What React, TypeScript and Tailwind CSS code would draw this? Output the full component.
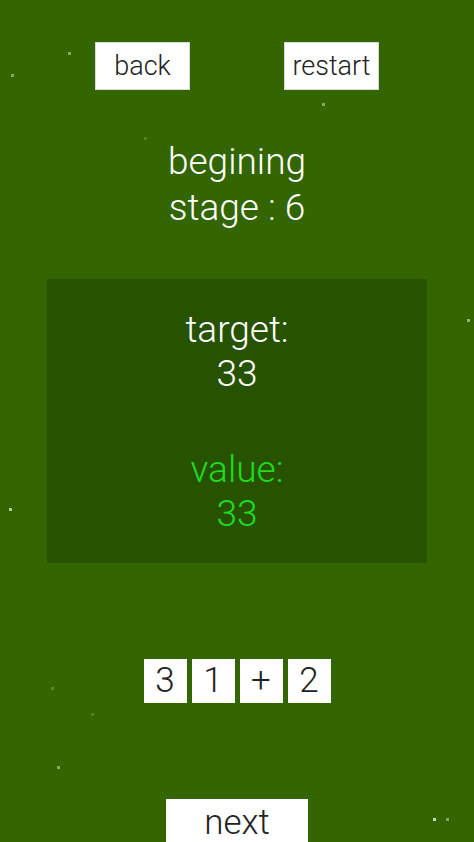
import React from "react";

/* stage screen — back/restart, target vs value, tiles, next */

const STARS = [
  { x: 12, y: 75, o: 0.5 },
  { x: 69, y: 53, o: 0.5 },
  { x: 323, y: 104, o: 0.55 },
  { x: 145, y: 138, o: 0.2 },
  { x: 332, y: 293, o: 0.5 },
  { x: 468, y: 320, o: 0.6 },
  { x: 207, y: 376, o: 0.7 },
  { x: 10, y: 509, o: 0.8 },
  { x: 52, y: 688, o: 0.25 },
  { x: 92, y: 714, o: 0.2 },
  { x: 58, y: 767, o: 0.55 },
  { x: 434, y: 819, o: 0.9 },
  { x: 447, y: 819, o: 0.5 },
];

const TILES = ["3", "1", "+", "2"];

export default function App() {
  return (
    <div
      className="relative h-[842px] w-[474px] overflow-hidden bg-[#336600] font-light antialiased"
      style={{ fontFamily: "Roboto, 'Liberation Sans', sans-serif" }}
    >
      {STARS.map((s, i) => (
        <span
          key={i}
          className="absolute h-[3px] w-[3px] bg-[#cfe8c0]"
          style={{ left: s.x - 1, top: s.y - 1, opacity: s.o }}
        />
      ))}

      <div className="relative flex flex-col items-center pt-[42px]">
        {/* top buttons */}
        <div className="flex gap-[94px]">
          <button className="flex h-[48px] w-[95px] items-center justify-center border border-[#d8d8d8] bg-white text-[27px] text-[#222]">
            back
          </button>
          <button className="flex h-[48px] w-[95px] items-center justify-center border border-[#d8d8d8] bg-white text-[27px] text-[#222]">
            restart
          </button>
        </div>

        {/* stage title */}
        <div className="mt-[49px] text-center text-[37px] leading-[46px] text-white">
          <div>begining</div>
          <div>stage : 6</div>
        </div>

        {/* target / value panel */}
        <div className="mt-[48px] flex h-[284px] w-[380px] flex-col items-center bg-[#275200] pt-[29px] text-center text-[37px] leading-[44px]">
          <div className="text-white">
            <div>target:</div>
            <div>33</div>
          </div>
          <div className="mt-[52px] text-[#1fdc1f]">
            <div>value:</div>
            <div>33</div>
          </div>
        </div>

        {/* tiles */}
        <div className="mt-[96px] flex gap-[5px]">
          {TILES.map((t, i) => (
            <div
              key={i}
              className="flex h-[44px] w-[43px] items-center justify-center bg-white text-[35px] text-[#222]"
            >
              {t}
            </div>
          ))}
        </div>

        {/* next */}
        <button className="mt-[96px] flex h-[48px] w-[142px] items-center justify-center bg-white text-[35px] text-[#222]">
          next
        </button>
      </div>
    </div>
  );
}
